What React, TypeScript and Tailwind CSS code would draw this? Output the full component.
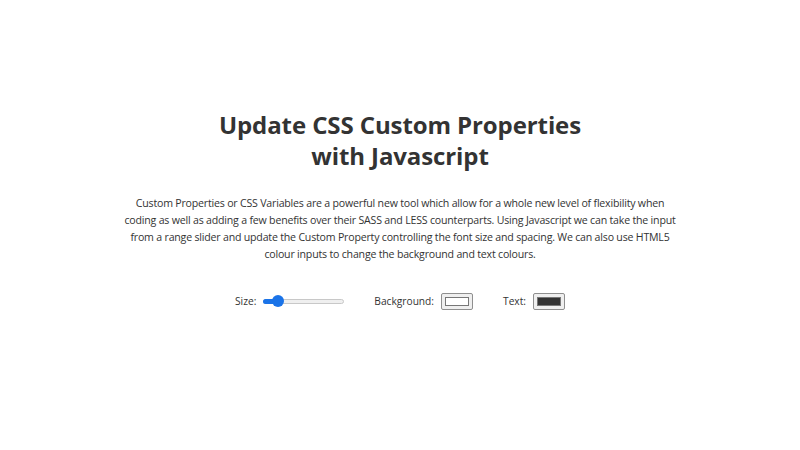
const font = { fontFamily: '"Open Sans", "Noto Sans", sans-serif' };

function Slider({ value }: { value: number }) {
  return (
    <div className="relative h-3 w-[81px] flex items-center">
      <div className="h-[5px] w-full rounded-full border border-[#c8c8c8] bg-[#efefef]" />
      <div
        className="absolute left-0 h-[5px] rounded-full bg-[#1a73e8]"
        style={{ width: `${value}%` }}
      />
      <div
        className="absolute h-3 w-3 -translate-x-1/2 rounded-full bg-[#1a73e8]"
        style={{ left: `${value}%` }}
      />
    </div>
  );
}

function Swatch({ color }: { color: string }) {
  return (
    <div className="flex h-[17px] w-[32px] items-center justify-center rounded-[2px] border border-[#8f8f8f] bg-[#efefef] p-[3px]">
      <div className="h-full w-full border border-[#777]" style={{ backgroundColor: color }} />
    </div>
  );
}

export default function App() {
  return (
    <div className="min-h-[450px] w-full bg-white text-[#333]" style={font}>
      <div className="mx-auto flex w-[570px] flex-col items-center pt-[109px] text-center">
        <h1 className="text-[24px] font-bold leading-[31px] tracking-[-0.1px]">
          Update CSS Custom Properties
          <br />
          with Javascript
        </h1>
        <p className="mt-[24px] w-[556px] text-[10.6px] leading-[17px] tracking-[-0.2px]">
          Custom Properties or CSS Variables are a powerful new tool which allow for a whole new level of flexibility when
          coding as well as adding a few benefits over their SASS and LESS counterparts. Using Javascript we can take the input
          from a range slider and update the Custom Property controlling the font size and spacing. We can also use HTML5
          colour inputs to change the background and text colours.
        </p>
        <div className="mt-[30px] flex items-center text-[10.2px]">
          <div className="flex items-center gap-[7px]">
            <span>Size:</span>
            <Slider value={18} />
          </div>
          <div className="ml-[30px] flex items-center gap-[7px]">
            <span>Background:</span>
            <Swatch color="#ffffff" />
          </div>
          <div className="ml-[30px] flex items-center gap-[7px]">
            <span>Text:</span>
            <Swatch color="#333333" />
          </div>
        </div>
      </div>
    </div>
  );
}
